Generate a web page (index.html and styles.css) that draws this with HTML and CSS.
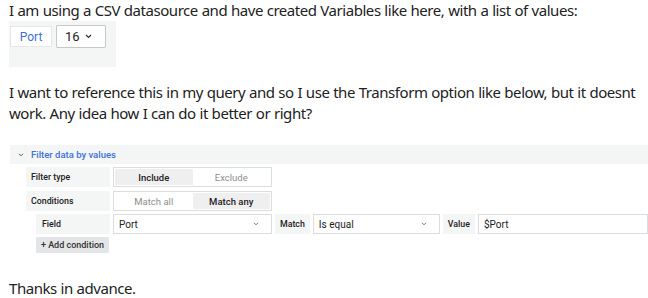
FILE: index.html
```html
<!DOCTYPE html>
<html>
<head>
<meta charset="utf-8">
<link rel="stylesheet" href="styles.css">
</head>
<body>
<div class="post">
  <p class="txt l1">I am using a CSV datasource and have created Variables like here, with a list of values:</p>
  <div class="vars">
    <span class="var-label">Port</span>
    <span class="var-select">16 <svg class="chev" width="7" height="5" viewBox="0 0 7 5"><polyline points="1,1 3.5,3.5 6,1" fill="none" stroke="#333" stroke-width="1.2"/></svg></span>
  </div>
  <p class="txt l2">I want to reference this in my query and so I use the Transform option like below, but it doesnt work. Any idea how I can do it better or right?</p>
  <div class="panel">
    <div class="panel-head">
      <svg class="hchev" width="6" height="4" viewBox="0 0 6 4"><polyline points="1,0.8 3,2.8 5,0.8" fill="none" stroke="#555" stroke-width="1"/></svg>
      <span class="title">Filter data by values</span>
    </div>
    <div class="panel-body">
      <div class="row">
        <div class="lbl w84">Filter type</div>
        <div class="seg">
          <span class="opt on">Include</span>
          <span class="opt">Exclude</span>
        </div>
      </div>
      <div class="row">
        <div class="lbl w84">Conditions</div>
        <div class="seg">
          <span class="opt">Match all</span>
          <span class="opt on">Match any</span>
        </div>
      </div>
      <div class="row sub">
        <div class="lbl w74">Field</div>
        <div class="sel w159"><span>Port</span><svg width="6" height="4" viewBox="0 0 6 4"><polyline points="1,0.8 3,2.8 5,0.8" fill="none" stroke="#666" stroke-width="0.9"/></svg></div>
        <div class="lbl sm">Match</div>
        <div class="sel w127"><span>Is equal</span><svg width="6" height="4" viewBox="0 0 6 4"><polyline points="1,0.8 3,2.8 5,0.8" fill="none" stroke="#666" stroke-width="0.9"/></svg></div>
        <div class="lbl sm">Value</div>
        <div class="sel grow"><span>$Port</span></div>
      </div>
      <div class="sub add-wrap">
        <span class="add">+ Add condition</span>
      </div>
    </div>
  </div>
  <p class="txt l3">Thanks in advance.</p>
</div>
</body>
</html>
```

FILE: styles.css
```css
html, body {
  margin: 0;
  padding: 0;
  background: #fff;
}
.post {
  padding-left: 9px;
  font-family: "Noto Sans", "Open Sans", sans-serif;
  color: #222;
  overflow: hidden;
  width: 639px;
}
.txt {
  margin: 0;
  font-size: 15px;
  line-height: 21px;
  letter-spacing: -0.45px;
  word-spacing: 0.3px;
}
.l1 {
  line-height: 20px;
  white-space: nowrap;
}
.vars {
  margin-top: 1px;
  width: 107px;
  height: 46px;
  box-sizing: border-box;
  background: #f4f5f5;
  padding: 4px 0 0 1px;
  display: flex;
  align-items: flex-start;
  gap: 4px;
  font-family: "Roboto", sans-serif;
}
.var-label {
  margin-top: 1px;
  height: 21px;
  width: 42px;
  box-sizing: border-box;
  background: #fff;
  border: 1px solid #e6e7e8;
  color: #3d71d9;
  font-size: 12px;
  display: flex;
  align-items: center;
  justify-content: center;
}
.var-select {
  height: 23px;
  width: 50px;
  box-sizing: border-box;
  background: #fff;
  border: 1px solid #c7c8ca;
  border-radius: 1px;
  color: #222;
  font-size: 13px;
  display: flex;
  align-items: center;
  padding-left: 8px;
  gap: 5px;
}
.l2 {
  margin-top: 15px;
  padding-right: 4px;
}
.panel {
  margin-top: 21px;
  margin-left: 1px;
  font-family: "Roboto", sans-serif;
}
.panel-head {
  height: 19px;
  background: #f4f5f5;
  display: flex;
  align-items: center;
  padding-left: 8px;
}
.hchev {
  margin-right: 7px;
}
.title {
  color: #3d71d9;
  font-size: 9.5px;
  font-weight: 500;
}
.panel-body {
  padding: 3px 0 0 16px;
  display: flex;
  flex-direction: column;
  gap: 4px;
}
.row {
  display: flex;
  gap: 3px;
  height: 20px;
}
.row.sub {
  margin-top: -1px;
}
.sub {
  margin-left: 10px;
}
.lbl {
  background: #f4f5f5;
  color: #222;
  font-size: 8.8px;
  font-weight: 500;
  display: flex;
  align-items: center;
  padding-left: 5px;
  box-sizing: border-box;
}
.w84 { width: 84px; padding-left: 5px; }
.w74 { width: 74px; padding-left: 6px; }
.lbl.sm {
  padding: 0 5px;
}
.seg {
  width: 159px;
  box-sizing: border-box;
  border: 1px solid #dcdddf;
  padding: 1px;
  display: flex;
}
.opt {
  flex: 1;
  display: flex;
  align-items: center;
  justify-content: center;
  font-size: 9.5px;
  color: #8e8e8e;
}
.opt.on {
  background: #efeff0;
  color: #222;
  font-weight: 500;
}
.sel {
  box-sizing: border-box;
  border: 1px solid #dcdddf;
  background: #fff;
  display: flex;
  align-items: center;
  justify-content: space-between;
  padding: 0 12px 0 5px;
  font-size: 10px;
  color: #222;
}
.w159 { width: 159px; }
.w127 { width: 127px; }
.sel.grow { flex: 1; }
.add-wrap {
  margin-top: -1px;
  display: flex;
}
.add {
  background: #e4e5e6;
  width: 73px;
  height: 16px;
  font-size: 9px;
  font-weight: 500;
  color: #333;
  display: flex;
  align-items: center;
  justify-content: center;
  border-radius: 1px;
}
.l3 {
  margin-top: 25px;
}
```
